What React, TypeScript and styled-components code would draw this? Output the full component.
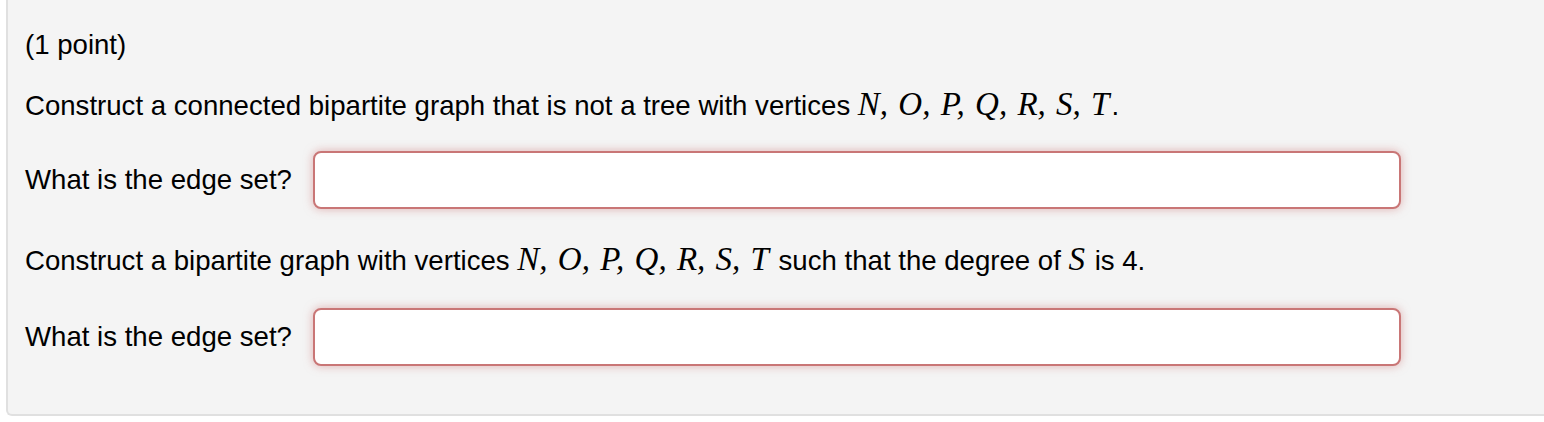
import React from 'react'
import styled, { createGlobalStyle } from 'styled-components'

const GlobalStyle = createGlobalStyle`
  html, body {
    margin: 0;
    padding: 0;
    background: #fff;
    overflow: hidden;
  }

  body {
    font-family: "Liberation Sans", Arial, Helvetica, sans-serif;
    color: #000;
  }
`

const Panel = styled.div`
  margin-left: 6px;
  padding: 30px 0 48px 17px;
  background: #f4f4f4;
  border: 2px solid #e0e0e0;
  border-top: none;
  border-right: none;
  border-bottom-left-radius: 6px;
`

const Line = styled.p<{ $gap: number }>`
  margin: ${p => p.$gap}px 0 0 0;
  font-size: 27.6px;
  line-height: 30px;
  white-space: nowrap;
`

const Math = styled.span`
  font-family: "Liberation Serif", "Times New Roman", serif;
  font-style: italic;
  font-size: 33px;
  word-spacing: 2px;
  margin-right: 2px;
`

const AnswerRow = styled.div<{ $gap: number }>`
  display: flex;
  align-items: center;
  gap: 17px;
  margin-top: ${p => p.$gap}px;
  font-size: 27.6px;
`

const Label = styled.span`
  width: 271px;
  white-space: nowrap;
`

const AnswerInput = styled.input`
  box-sizing: border-box;
  width: 1088px;
  height: 58px;
  border: 2px solid #c97676;
  border-radius: 8px;
  background: #fff;
  box-shadow: 0 0 10px rgba(205, 120, 120, 0.55);
  outline: none;
  font-size: 26px;
  padding: 0 12px;
`

const Vertices: React.FC = () => (
  <Math>N, O, P, Q, R, S, T</Math>
)

const App: React.FC = () => {
  return (
    <>
      <GlobalStyle />
      <Panel>
        <Line $gap={0}>(1 point)</Line>
        <Line $gap={29}>
          Construct a connected bipartite graph that is not a tree with vertices <Vertices />.
        </Line>
        <AnswerRow $gap={30}>
          <Label>What is the edge set?</Label>
          <AnswerInput type="text" />
        </AnswerRow>
        <Line $gap={35}>
          Construct a bipartite graph with vertices <Vertices /> such that the degree of <Math>S</Math> is 4.
        </Line>
        <AnswerRow $gap={32}>
          <Label>What is the edge set?</Label>
          <AnswerInput type="text" />
        </AnswerRow>
      </Panel>
    </>
  )
}

export default App
